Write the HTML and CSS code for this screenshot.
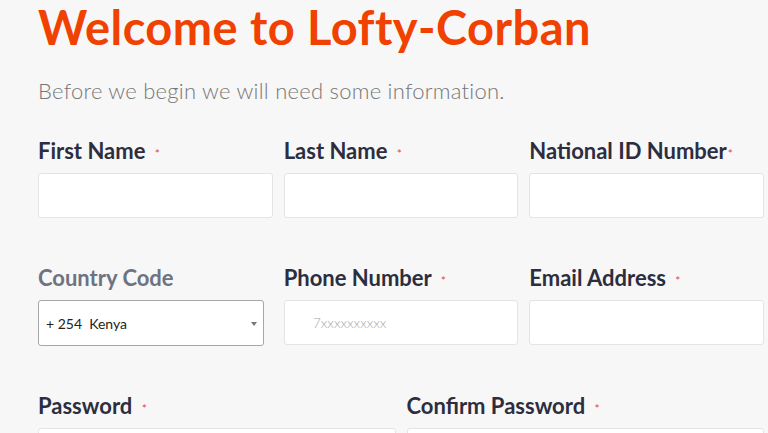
FILE: index.html
```html
<!DOCTYPE html>
<html lang="en">
<head>
<meta charset="utf-8">
<title>Welcome to Lofty-Corban</title>
<link rel="stylesheet" href="styles.css">
</head>
<body>
<main class="page">
  <h1 class="title">Welcome to Lofty-Corban</h1>
  <p class="lead">Before we begin we will need some information.</p>
  <form class="form">
    <div class="row row-3">
      <div class="field">
        <label class="label">First Name <span class="req">*</span></label>
        <input class="input" type="text">
      </div>
      <div class="field">
        <label class="label">Last Name <span class="req">*</span></label>
        <input class="input" type="text">
      </div>
      <div class="field">
        <label class="label">National ID Number<span class="req tight">*</span></label>
        <input class="input" type="text">
      </div>
    </div>
    <div class="row row-3">
      <div class="field">
        <label class="label muted">Country Code</label>
        <div class="select-wrap">
          <select class="select">
            <option>+ 254&nbsp;&nbsp;Kenya</option>
          </select>
          <span class="caret"></span>
        </div>
      </div>
      <div class="field">
        <label class="label">Phone Number <span class="req">*</span></label>
        <input class="input phone" type="text" placeholder="7xxxxxxxxxx">
      </div>
      <div class="field">
        <label class="label">Email Address <span class="req">*</span></label>
        <input class="input" type="email">
      </div>
    </div>
    <div class="row row-2">
      <div class="field">
        <label class="label">Password <span class="req">*</span></label>
        <input class="input" type="password">
      </div>
      <div class="field">
        <label class="label">Confirm Password <span class="req">*</span></label>
        <input class="input" type="password">
      </div>
    </div>
  </form>
</main>
</body>
</html>
```

FILE: styles.css
```css
* { box-sizing: border-box; }
html, body {
  margin: 0;
  background: #f7f7f7;
  font-family: "Lato", "Noto Sans", sans-serif;
  overflow: hidden;
}
.page {
  padding: 0 4px 0 38px;
}
.title {
  margin: 0;
  font-size: 47px;
  line-height: 54px;
  font-weight: 700;
  letter-spacing: 0.45px;
  color: #f04100;
}
.lead {
  margin: 22px 0 0;
  font-size: 22px;
  line-height: 30px;
  font-weight: 300;
  letter-spacing: 0.25px;
  color: #767676;
}
.form {
  margin-top: 29px;
}
.row {
  display: grid;
  column-gap: 11px;
  margin-bottom: 44px;
}
.row-3 { grid-template-columns: repeat(3, 1fr); }
.row-2 { grid-template-columns: repeat(2, 1fr); }
.field {
  display: flex;
  flex-direction: column;
}
.label {
  display: block;
  height: 31px;
  font-size: 22px;
  line-height: 31px;
  font-weight: 700;
  color: #2c2e40;
  margin-bottom: 7px;
  white-space: nowrap;
}
.label.muted { color: #6d7380; }
.req {
  color: #e2474f;
  font-size: 12px;
  line-height: 1;
  font-weight: 400;
  vertical-align: 1px;
  margin-left: 4px;
}
.req.tight { margin-left: 1px; }
.input {
  height: 45px;
  width: 100%;
  background: #fff;
  border: 1px solid #e4e4e4;
  border-radius: 3px;
  font-family: inherit;
  font-size: 14px;
  padding: 0 12px;
  outline: none;
}
.input.phone { padding-left: 28px; }
.input::placeholder {
  color: #a9a9a9;
  font-weight: 300;
}
.select-wrap {
  position: relative;
  width: 226px;
}
.select {
  appearance: none;
  -webkit-appearance: none;
  width: 100%;
  height: 46px;
  background: #fff;
  border: 1px solid #a6a6a6;
  border-radius: 3px;
  font-family: inherit;
  font-size: 14px;
  color: #222;
  padding: 0 7px;
  outline: none;
}
.caret {
  position: absolute;
  right: 7px;
  top: 22px;
  width: 0;
  height: 0;
  border-left: 3.5px solid transparent;
  border-right: 3.5px solid transparent;
  border-top: 4px solid #777;
}
```
